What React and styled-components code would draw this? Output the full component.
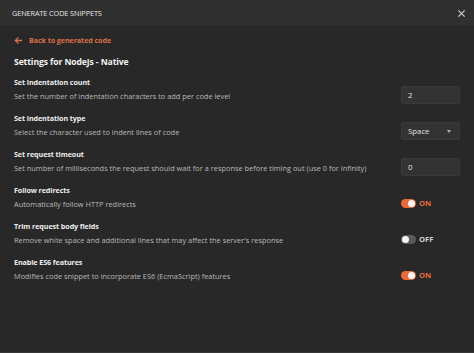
import React from 'react';
import styled, { createGlobalStyle } from 'styled-components';

const Global = createGlobalStyle`
    html, body {
        margin: 0;
        padding: 0;
        background: #282828;
    }
    body {
        font-family: "Open Sans", "Liberation Sans", sans-serif;
        -webkit-font-smoothing: antialiased;
    }
`

const Modal = styled.div`
    width: 474px;
    height: 353px;
    background: #282828;
    display: flex;
    flex-direction: column;
    box-sizing: border-box;
    border-bottom: 1px solid #363636;
`

const Header = styled.div`
    height: 25px;
    background: #303030;
    display: flex;
    align-items: center;
    justify-content: space-between;
    padding: 1px 8px 0 12px;
    box-sizing: border-box;
    color: #e6e6e6;
    font-size: 7.3px;
    letter-spacing: -0.1px;
`

const Close = styled.button`
    background: none;
    border: 0;
    padding: 0;
    display: flex;
    color: #cfcfcf;
    cursor: pointer;
`

const Body = styled.div`
    padding: 9px 14px 0 14px;
    display: flex;
    flex-direction: column;
`

const BackLink = styled.a`
    display: flex;
    align-items: center;
    gap: 6px;
    color: #d9704a;
    font-size: 7.2px;
    letter-spacing: -0.1px;
    font-weight: 700;
    height: 12px;
`

const Heading = styled.div`
    color: #f2f2f2;
    font-size: 8.6px;
    letter-spacing: -0.1px;
    font-weight: 700;
    margin-top: 10px;
    margin-bottom: 8px;
`

const Row = styled.div`
    display: flex;
    align-items: flex-start;
    justify-content: space-between;
    height: 36px;
`

const Text = styled.div`
    display: flex;
    flex-direction: column;
    gap: 2px;
`

const Label = styled.div`
    color: #ededed;
    font-size: 7.2px;
    letter-spacing: -0.1px;
    font-weight: 700;
    line-height: 12px;
`

const Desc = styled.div`
    color: #b8b8b8;
    font-size: 7.4px;
    line-height: 12px;
`

const Control = styled.div`
    width: 59px;
    flex-shrink: 0;
    display: flex;
    align-items: center;
    margin-top: ${p => p.$offset || 0}px;
`

const Input = styled.div`
    width: 59px;
    height: 18px;
    box-sizing: border-box;
    background: #333333;
    border: 1px solid #3a3a3a;
    border-radius: 2px;
    color: #e0e0e0;
    font-size: 7.8px;
    padding: 0 8px 0 6px;
    display: flex;
    align-items: center;
    justify-content: space-between;
`

const Caret = styled.span`
    width: 0;
    height: 0;
    border-left: 2.5px solid transparent;
    border-right: 2.5px solid transparent;
    border-top: 3px solid #b0b0b0;
`

const Track = styled.span`
    width: 15px;
    height: 9px;
    border-radius: 5px;
    background: ${p => (p.$on ? '#e8693a' : '#5a5a5a')};
    position: relative;
    display: inline-block;
`

const Knob = styled.span`
    position: absolute;
    top: 1px;
    left: ${p => (p.$on ? '7px' : '1px')};
    width: 7px;
    height: 7px;
    border-radius: 50%;
    background: #f4f4f4;
`

const ToggleText = styled.span`
    margin-left: 3px;
    font-size: 7.6px;
    font-weight: 700;
    color: ${p => (p.$on ? '#e8693a' : '#d0d0d0')};
`

const Toggle = ({ on }) => (
    <>
        <Track $on={on}><Knob $on={on} /></Track>
        <ToggleText $on={on}>{on ? 'ON' : 'OFF'}</ToggleText>
    </>
)

const settings = [
    { label: 'Set indentation count', desc: 'Set the number of indentation characters to add per code level', input: '2' },
    { label: 'Set indentation type', desc: 'Select the character used to indent lines of code', select: 'Space' },
    { label: 'Set request timeout', desc: 'Set number of milliseconds the request should wait for a response before timing out (use 0 for infinity)', input: '0' },
    { label: 'Follow redirects', desc: 'Automatically follow HTTP redirects', toggle: true },
    { label: 'Trim request body fields', desc: "Remove white space and additional lines that may affect the server's response", toggle: false },
    { label: 'Enable ES6 features', desc: 'Modifies code snippet to incorporate ES6 (EcmaScript) features', toggle: true },
]

export default function App() {
    return (
        <Modal>
            <Global />
            <Header>
                <span>GENERATE CODE SNIPPETS</span>
                <Close aria-label="close">
                    <svg width="9" height="9" viewBox="0 0 10 10" stroke="currentColor" strokeWidth="1.3">
                        <path d="M1.5 1.5 L8.5 8.5 M8.5 1.5 L1.5 8.5" />
                    </svg>
                </Close>
            </Header>
            <Body>
                <BackLink>
                    <svg width="9" height="9" viewBox="0 0 10 10" fill="none" stroke="currentColor" strokeWidth="1.4">
                        <path d="M9 5 H1.5 M5 1.5 L1.5 5 L5 8.5" />
                    </svg>
                    Back to generated code
                </BackLink>
                <Heading>Settings for NodeJs - Native</Heading>
                {settings.map(s => (
                    <Row key={s.label}>
                        <Text>
                            <Label>{s.label}</Label>
                            <Desc>{s.desc}</Desc>
                        </Text>
                        <Control $offset={s.toggle !== undefined ? 14 : 10}>
                            {s.input && <Input>{s.input}</Input>}
                            {s.select && <Input>{s.select}<Caret /></Input>}
                            {s.toggle !== undefined && <Toggle on={s.toggle} />}
                        </Control>
                    </Row>
                ))}
            </Body>
        </Modal>
    )
}
